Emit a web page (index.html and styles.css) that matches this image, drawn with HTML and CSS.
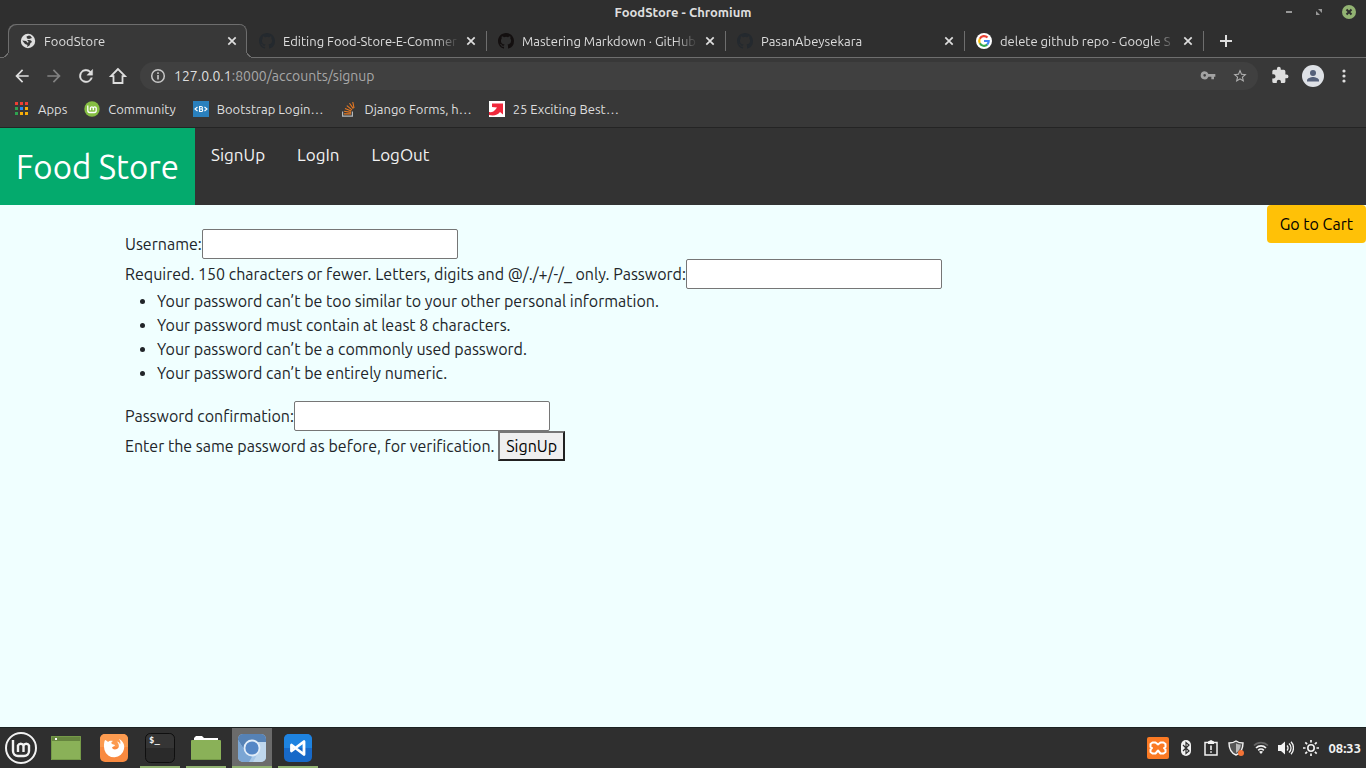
FILE: index.html
```html
<!DOCTYPE html>
<html lang="en">
<head>
  <meta charset="UTF-8" />
  <meta name="viewport" content="width=device-width, initial-scale=1.0" />
  <title>FoodStore</title>
  <link rel="stylesheet" href="styles.css">
</head>
<body>
  <!-- shared icons -->
  <svg class="sprite" aria-hidden="true">
    <symbol id="github" viewBox="0 0 16 16"><path d="M8 0C3.58 0 0 3.58 0 8c0 3.54 2.29 6.53 5.47 7.59.4.07.55-.17.55-.38 0-.19-.01-.82-.01-1.49-2.01.37-2.53-.49-2.69-.94-.09-.23-.48-.94-.82-1.13-.28-.15-.68-.52-.01-.53.63-.01 1.08.58 1.23.82.72 1.21 1.87.87 2.33.66.07-.52.28-.87.51-1.07-1.78-.2-3.64-.89-3.64-3.95 0-.87.31-1.59.82-2.15-.08-.2-.36-1.02.08-2.12 0 0 .67-.21 2.2.82a7.6 7.6 0 0 1 4 0c1.53-1.04 2.2-.82 2.2-.82.44 1.1.16 1.92.08 2.12.51.56.82 1.27.82 2.15 0 3.07-1.87 3.75-3.65 3.95.29.25.54.73.54 1.48 0 1.07-.01 1.93-.01 2.2 0 .21.15.46.55.38A8.01 8.01 0 0 0 16 8c0-4.42-3.58-8-8-8z"/></symbol>
    <symbol id="close" viewBox="0 0 16 16"><path d="M4.300 4.300l7.400 7.400M11.700 4.300l-7.400 7.400" fill="none" stroke="currentColor" stroke-width="1.700"/></symbol>
  </svg>

  <header class="browser">
    <div class="titlebar">
      <span class="window-title">FoodStore - Chromium</span>
      <div class="window-buttons">
        <button aria-label="Minimize"><svg width="14" height="14" viewBox="0 0 14 14"><path d="M4 6h6v2H4z" fill="#999"/></svg></button>
        <button aria-label="Restore"><svg width="14" height="14" viewBox="0 0 14 14"><path d="M6 4h4v4zM4 6v4h4z" fill="#999"/></svg></button>
        <button aria-label="Close"><svg width="14" height="14" viewBox="0 0 14 14"><circle cx="7" cy="7" r="7" fill="#92b372"/><path d="M4.500 4.500l5 5M9.500 4.500l-5 5" stroke="#2f2f2f" stroke-width="2"/></svg></button>
      </div>
    </div>

    <div class="tabs">
      <div class="tab active">
        <svg width="16" height="16" viewBox="0 0 16 16"><circle cx="8" cy="8" r="7.200" fill="#dedede"/><path d="M9 2.500L6.500 3.500 7 5.500l2 .5 3-1-1.500-2zM2.300 7.500l3.700.5 2 2 .500-1.500L7 7 9 7l2 .5 1 1.500-1.500 1-1 2.500-2.500 1.500.5-2-2.500-1-2-2.500z" fill="#383838"/></svg>
        <span>FoodStore</span>
        <button aria-label="Close tab"><svg width="16" height="16"><use href="#close"/></svg></button>
      </div>
      <div class="tab">
        <svg class="gh-blue" width="16" height="16"><use href="#github"/></svg>
        <span>Editing Food-Store-E-Commer</span>
        <button aria-label="Close tab"><svg width="16" height="16"><use href="#close"/></svg></button>
      </div>
      <div class="tab">
        <svg class="gh-black" width="16" height="16"><use href="#github"/></svg>
        <span>Mastering Markdown · GitHub</span>
        <button aria-label="Close tab"><svg width="16" height="16"><use href="#close"/></svg></button>
      </div>
      <div class="tab">
        <svg class="gh-blue" width="16" height="16"><use href="#github"/></svg>
        <span>PasanAbeysekara</span>
        <button aria-label="Close tab"><svg width="16" height="16"><use href="#close"/></svg></button>
      </div>
      <div class="tab">
        <svg width="16" height="16" viewBox="0 0 16 16"><circle cx="8" cy="8" r="8" fill="#fff"/><g fill="none" stroke-width="2.200"><path d="M11.500 4.600A4.800 4.800 0 0 0 3.800 5.700" stroke="#ea4335"/><path d="M3.800 5.700a4.800 4.800 0 0 0 0 4.600" stroke="#fbbc05"/><path d="M3.800 10.300a4.800 4.800 0 0 0 7.400 1.300" stroke="#34a853"/><path d="M11.200 11.600A4.800 4.800 0 0 0 12.700 8H8" stroke="#4285f4"/></g></svg>
        <span>delete github repo - Google S</span>
        <button aria-label="Close tab"><svg width="16" height="16"><use href="#close"/></svg></button>
      </div>
      <button class="new-tab" aria-label="New tab"><svg width="14" height="14" viewBox="0 0 14 14"><path d="M7 1v12M1 7h12" stroke="#dedede" stroke-width="2"/></svg></button>
    </div>

    <div class="toolbar">
      <button aria-label="Back"><svg width="20" height="20" viewBox="0 0 24 24"><path d="M20 11H7.830l5.590-5.590L12 4l-8 8 8 8 1.410-1.410L7.830 13H20z" fill="#dedede"/></svg></button>
      <button aria-label="Forward"><svg width="20" height="20" viewBox="0 0 24 24"><path d="M12 4l-1.410 1.410L16.170 11H4v2h12.170l-5.580 5.590L12 20l8-8z" fill="#828282"/></svg></button>
      <button aria-label="Reload"><svg width="20" height="20" viewBox="0 0 24 24"><path d="M17.650 6.350A8 8 0 1 0 19.730 14h-2.080A6 6 0 1 1 12 6c1.660 0 3.140.69 4.220 1.780L13 11h7V4z" fill="#dedede" stroke="#dedede" stroke-width=".4"/></svg></button>
      <button aria-label="Home"><svg width="20" height="20" viewBox="0 0 20 20"><path d="M10 3L3 10.200h2.500V17h9v-6.800H17z" fill="none" stroke="#dedede" stroke-width="1.800"/></svg></button>
      <div class="omnibox">
        <svg width="16" height="16" viewBox="0 0 16 16"><circle cx="8" cy="8" r="6.300" fill="none" stroke="#c8c8c8" stroke-width="1.500"/><path d="M7.200 7h1.600v4.500H7.200zM7.200 4.300h1.600v1.600H7.200z" fill="#c8c8c8"/></svg>
        <div class="url"><b>127.0.0.1</b>:8000/accounts/signup</div>
        <svg width="16" height="16" viewBox="0 0 24 24"><path d="M12.650 9A5.990 5.990 0 0 0 7 5a6 6 0 1 0 5.650 8H17v4h4v-4h2V9H12.650zM7 13a2 2 0 1 1 0-4 2 2 0 0 1 0 4z" fill="#a2a2a2"/></svg>
        <svg width="16" height="16" viewBox="0 0 24 24"><path d="M22 9.240l-7.190-.62L12 2 9.190 8.630 2 9.240l5.460 4.730L5.820 21 12 17.270 18.180 21l-1.630-7.030zM12 15.400l-3.760 2.270 1-4.280-3.320-2.880 4.380-.38L12 6.100l1.710 4.040 4.380.38-3.320 2.880 1 4.280z" fill="#b0b0b0"/></svg>
      </div>
      <button aria-label="Extensions"><svg width="20" height="20" viewBox="-1 0 26 26"><path d="M20.500 11H19V7a2 2 0 0 0-2-2h-4V3.500a2.500 2.500 0 0 0-5 0V5H4a2 2 0 0 0-1.990 2v3.800H3.500a2.700 2.700 0 0 1 0 5.400H2V20a2 2 0 0 0 2 2h3.800v-1.500a2.700 2.700 0 0 1 5.400 0V22H17a2 2 0 0 0 2-2v-4h1.500a2.500 2.500 0 0 0 0-5z" fill="#dedede"/></svg></button>
      <button aria-label="Profile"><svg width="22" height="22" viewBox="0 0 22 22"><circle cx="11" cy="11" r="11" fill="#dee1e6"/><circle cx="11" cy="8" r="3" fill="#56617a"/><path d="M5 16.500v-1.200c0-2 4-3.300 6-3.300s6 1.300 6 3.300v1.200z" fill="#56617a"/></svg></button>
      <button aria-label="Menu"><svg width="16" height="16" viewBox="0 0 16 16" fill="#dedede"><circle cx="8" cy="3" r="1.600"/><circle cx="8" cy="8" r="1.600"/><circle cx="8" cy="13" r="1.600"/></svg></button>
    </div>

    <nav class="bookmarks">
      <a href="#"><svg width="15" height="16" viewBox="0 0 15 16"><path d="M0 1h3v3H0zM5 1h3v3H5zM10 1h3v3h-3z" fill="#ee3f34"/><path d="M0 6h3v3H0zM0 11h3v3H0z" fill="#2fa24f"/><path d="M5 6h3v3H5z" fill="#2b88f5"/><path d="M10 6h3v3h-3zM5 11h3v3H5zM10 11h3v3h-3z" fill="#f9ae08"/></svg>Apps</a>
      <a href="#"><svg width="16" height="16" viewBox="0 0 16 16"><circle cx="8" cy="8" r="7.700" fill="#86be43"/><path d="M3.800 4.500V9.500a2 2 0 0 0 2 2h4.400a2 2 0 0 0 2-2V7a1.500 1.500 0 0 0-2.900 0v2.300M9.300 7a1.500 1.500 0 0 0-2.900 0v2.300" fill="none" stroke="#fff" stroke-width="1.300"/></svg>Community</a>
      <a href="#"><svg width="16" height="16" viewBox="0 0 16 16"><path d="M0 0h16v16H0z" fill="#2a80bd"/><path d="M4.500 6L2 8l2.500 2M11.500 6L14 8l-2.500 2" fill="none" stroke="#fff" stroke-width="1.100"/><path d="M6.600 5.500h1.600a1.200 1.200 0 0 1 0 2.500H6.600zM6.600 8h1.800a1.200 1.200 0 0 1 0 2.500H6.600z" fill="none" stroke="#fff" stroke-width="1.100"/></svg>Bootstrap Login…</a>
      <a href="#"><svg width="16" height="16" viewBox="0 0 16 16" fill="none"><path d="M2.600 10.500v4.700h9.800v-4.700" stroke="#b5b8ba" stroke-width="1.200"/><path d="M4 12.900h7M4.100 10.300l6.900 1.100M5 7.500l6.300 2.600M6.800 4.600l5.200 4.300M9.500 2.200l3.800 5.400M12.800 1l1.200 6" stroke="#e87922" stroke-width="1.100"/></svg>Django Forms, h…</a>
      <a href="#"><svg width="16" height="16" viewBox="0 0 16 16"><path d="M0 0h16v16H0z" fill="#fff"/><path d="M3 2.500h11v11L11 11c-2 3-6 4-11 3v-3c3 .5 5-.5 6.500-2.500L8 6.500 3 6z" fill="#f0283c"/></svg>25 Exciting Best…</a>
    </nav>
  </header>

  <main class="page">
    <nav class="topnav">
      <a class="brand" href="#">Food Store</a>
      <a href="#">SignUp</a>
      <a href="#">LogIn</a>
      <a href="#">LogOut</a>
    </nav>
    <a class="btn-cart" href="#">Go to Cart</a>
    <div class="container">
      <form onsubmit="return false">
        <label for="username">Username:</label><input type="text" id="username" />
        <br/>
        Required. 150 characters or fewer. Letters, digits and @/./+/-/_ only.
        <label for="password1">Password:</label><input type="password" id="password1" />
        <ul>
          <li>Your password can’t be too similar to your other personal information.</li>
          <li>Your password must contain at least 8 characters.</li>
          <li>Your password can’t be a commonly used password.</li>
          <li>Your password can’t be entirely numeric.</li>
        </ul>
        <label for="password2">Password confirmation:</label><input type="password" id="password2" />
        <br/>
        Enter the same password as before, for verification.
        <button type="submit">SignUp</button>
      </form>
    </div>
  </main>

  <footer class="taskbar">
    <button class="task start" aria-label="Menu"><svg width="32" height="32" viewBox="0 0 32 32" fill="none" stroke="#f2f2f2"><circle cx="16" cy="16" r="15" stroke-width="2"/><path d="M8 8v11a5 5 0 0 0 5 5h6a5 5 0 0 0 5-5v-5.500a3 3 0 0 0-5.500 0V20M18.500 13.500a3 3 0 0 0-5.500 0V20" stroke-width="2.400"/></svg></button>
    <div class="launchers">
      <button class="task" aria-label="Show desktop"><svg width="30" height="24" viewBox="0 0 30 24"><path d="M0 0h30v24H0z" fill="#8ab158"/><path d="M0 0h30v5H0z" fill="#66853f"/><path d="M4 2h2v2H4z" fill="#fff"/><path d="M.5.500h29v23H.5z" fill="none" stroke="#759a48"/></svg></button>
      <button class="task" aria-label="Firefox"><svg width="30" height="30" viewBox="0 0 30 30"><rect x="1" y="1" width="28" height="28" rx="5" fill="#f98a40"/><path d="M1 14V6a5 5 0 0 1 5-5h18a5 5 0 0 1 5 5v8z" fill="#fc9b50"/><path d="M6 7c1 0 2 1 3 2 1-1 3-1.500 5-1-2 1-2 2-1 3l3 1c0 1-2 1.500-3 2.500.5 2 3 2.500 5 1.500 3-1.500 2-5 0-7.500 2 .5 3 2 3 3 1-2 0-4-1-5.500 4 2 6 6 5 10a10 10 0 0 1-19.500 1C4.500 13 5 9 6 7z" fill="#fff"/></svg></button>
    </div>
    <button class="task open" aria-label="Terminal"><svg width="30" height="30" viewBox="0 0 30 30"><rect x=".5" y=".5" width="29" height="29" rx="5" fill="#2a2a2a" stroke="#0f0f0f"/><path d="M1 15V6a5 5 0 0 1 5-5h18a5 5 0 0 1 5 5v9z" fill="#353535"/><text x="4" y="10" class="prompt">$_</text></svg></button>
    <button class="task open" aria-label="Files"><svg width="30" height="26" viewBox="0 0 30 26"><path d="M3 6V3l2-2h6l2 2h14v3z" fill="#fff"/><rect y="5" width="30" height="20" rx="1" fill="#8ab158"/><path d="M.500 24.500h29" stroke="#759a48"/></svg></button>
    <button class="task open current" aria-label="Chromium"><svg width="30" height="30" viewBox="0 0 30 30"><rect x="1" y="1" width="28" height="28" rx="5" fill="#a8c8e8"/><path d="M1 6a5 5 0 0 1 5-5h18a5 5 0 0 1 5 5v3H15L8 18 1 7z" fill="#5682b5"/><path d="M1 7l8 12 7 3-4 7H6a5 5 0 0 1-5-5z" fill="#7ba6d4"/><path d="M22 18l-6 11h8a5 5 0 0 0 5-5V9h-9z" fill="#bfd7ed"/><circle cx="15" cy="15" r="7.500" fill="#5587c6" stroke="#e2edf8" stroke-width="1.800"/></svg></button>
    <button class="task open" aria-label="Visual Studio Code"><svg width="30" height="30" viewBox="0 0 30 30"><rect x="1" y="1" width="28" height="28" rx="5" fill="#1769c8"/><path d="M1 15V6a5 5 0 0 1 5-5h18a5 5 0 0 1 5 5v9z" fill="#1e83e0"/><path d="M21 8.500v13L8.500 12v6z" fill="none" stroke="#fff" stroke-width="2.800" stroke-linejoin="round"/></svg></button>

    <div class="tray">
      <svg width="22" height="22" viewBox="0 0 22 22"><rect width="22" height="22" rx="2" fill="#fb7a24"/><path d="M5.500 5.500h3l2.500 2 2.500-2h3L18.500 7v3L17 11l1.500 1.500v2.500l-2 1.500h-3l-2.500-3-2.500 3h-3l-2-1.500v-2.500L5 11 3.500 10V7z" fill="none" stroke="#fff" stroke-width="2" stroke-linejoin="round"/></svg>
      <svg width="16" height="16" viewBox="0 0 16 16"><rect x="3" width="10" height="16" rx="5" fill="#f2f2f2"/><path d="M5 5l6 6-3 2.500v-11L11 5l-6 6" fill="none" stroke="#2f2f2f" stroke-width="1.200"/></svg>
      <svg width="16" height="16" viewBox="0 0 16 16"><path d="M2 2.500h12v12.500H2z" fill="none" stroke="#f2f2f2" stroke-width="1.500"/><path d="M5 1.500L8 0l3 1.500V4H5zM7.200 5.500h1.600v4.500H7.200zM7.200 11.200h1.600v1.600H7.200z" fill="#f2f2f2"/></svg>
      <svg width="16" height="16" viewBox="0 0 16 16"><path d="M8 1c2 1.500 4.500 2 7 2 0 6-2 10-7 12C3 13 1 9 1 3c2.500 0 5-.500 7-2z" fill="#555" stroke="#f2f2f2" stroke-width="1.400"/><path d="M8 3.200c1.500 1 3 1.300 4.800 1.400C12.500 8.500 11 11.500 8 13z" fill="#b8b8b8"/><circle cx="13" cy="13" r="3" fill="#f37336"/></svg>
      <svg width="16" height="16" viewBox="0 0 16 16" fill="none" stroke-width="1.700"><path d="M1 5.500a10 10 0 0 1 14 0" stroke="#666"/><path d="M3 8a7 7 0 0 1 10 0M5.200 10.300a4 4 0 0 1 5.600 0" stroke="#f2f2f2"/><path d="M8 14l-2-2.200a3 3 0 0 1 4 0z" fill="#f2f2f2"/></svg>
      <svg width="16" height="16" viewBox="0 0 16 16"><path d="M0 5h3l4-3.500v13L3 11H0z" fill="#f2f2f2"/><path d="M9 5.500a3.500 3.500 0 0 1 0 5M11 3.500a6 6 0 0 1 0 9M13 1.800a9 9 0 0 1 0 12.400" fill="none" stroke="#f2f2f2" stroke-width="1.300"/></svg>
      <svg width="16" height="16" viewBox="0 0 16 16" fill="none" stroke="#f2f2f2"><circle cx="8" cy="8" r="3.200" stroke-width="1.600"/><path d="M8 0v2.500M8 13.500V16M0 8h2.500M13.500 8H16M2.300 2.300l1.800 1.800M11.900 11.900l1.800 1.800M2.300 13.700l1.800-1.800M11.900 4.100l1.800-1.800" stroke-width="1.700"/></svg>
      <time>08:33</time>
    </div>
  </footer>
</body>
</html>
```

FILE: styles.css
```css
* {
  box-sizing: border-box;
}
body {
  margin: 0;
  min-height: 100vh;
  display: flex;
  flex-direction: column;
  font-family: Ubuntu, "Noto Sans", sans-serif;
  font-size: 16px;
  line-height: 24px;
  color: #212529;
  background-color: azure;
}
svg {
  display: block;
  flex: none;
}
.sprite {
  position: absolute;
  width: 0;
  height: 0;
}
a {
  text-decoration: none;
  color: inherit;
}

/* browser window */
.browser {
  background-color: #383838;
  color: #dedede;
  font-size: 13px;
  border-bottom: 1px solid #242424;
}
.browser button, .task {
  display: flex;
  align-items: center;
  justify-content: center;
  padding: 0;
  border: 0;
  background: none;
  color: inherit;
}
.titlebar {
  display: grid;
  grid-template-columns: 1fr auto 1fr;
  align-items: center;
  height: 24px;
  background-color: #2f2f2f;
}
.window-title {
  grid-column: 2;
  font-weight: 700;
}
.window-buttons {
  display: flex;
  justify-content: flex-end;
  gap: 16px;
  padding-right: 10px;
}
.tabs {
  display: flex;
  height: 34px;
  padding-left: 8px;
  background-color: #2f2f2f;
  box-shadow: inset 0 -1px #6e6e6e;
}
.tab {
  position: relative;
  display: flex;
  flex: 0 1 239px;
  min-width: 0;
  align-items: center;
  gap: 8px;
  padding: 0 7px 0 12px;
}
.tab span {
  flex: 1;
  overflow: hidden;
  white-space: nowrap;
  mask-image: linear-gradient(to left, transparent, #000 24px);
}
.tab button {
  margin-left: -4px;
}
.tab:not(.active)::after {
  content: "";
  position: absolute;
  right: -1px;
  top: 7px;
  width: 1px;
  height: 20px;
  background-color: #6e6e6e;
}
.tab.active {
  background-color: #383838;
  box-shadow: inset 1px 1px #6e6e6e, inset -1px 0 #6e6e6e;
  border-radius: 8px 8px 0 0;
}
.tab.active::before, .tab.active::after {
  content: "";
  position: absolute;
  bottom: 0;
  width: 8px;
  height: 8px;
}
.tab.active::before {
  left: -7px;
  background: radial-gradient(circle at 0 0, #2f2f2f 7px, #6e6e6e 7px, #6e6e6e 8px, #383838 8px);
}
.tab.active::after {
  right: -7px;
  background: radial-gradient(circle at 100% 0, #2f2f2f 7px, #6e6e6e 7px, #6e6e6e 8px, #383838 8px);
}
.gh-blue { fill: #24292e; }
.gh-black { fill: #130f0f; }
.new-tab {
  width: 46px;
}
.toolbar {
  display: flex;
  align-items: center;
  gap: 12px;
  height: 36px;
  padding: 0 14px 0 12px;
}
.omnibox {
  flex: 1;
  display: flex;
  align-items: center;
  gap: 16px;
  height: 28px;
  padding: 0 10px;
  border-radius: 14px;
  background-color: #404040;
  font-size: 14px;
  color: #a8a8a8;
}
.url {
  flex: 1;
  margin-left: -8px;
}
.url b {
  font-weight: 400;
  color: #dedede;
}
.bookmarks {
  display: flex;
  align-items: center;
  gap: 17px;
  height: 33px;
  padding: 0 15px 4px;
}
.bookmarks a {
  display: flex;
  align-items: center;
  gap: 8px;
  white-space: nowrap;
}

/* food store page */
.page {
  flex: 1;
}
.topnav {
  display: flex;
  background-color: #333;
}
.topnav a {
  padding: 14px 16px;
  font-size: 17px;
  line-height: 26px;
  color: #f2f2f2;
}
.topnav .brand {
  font-size: 33px;
  line-height: 49px;
  color: white;
  background-color: #04aa6d;
}
.btn-cart {
  float: right;
  padding: 7px 13px;
  border-radius: 4px;
  background-color: #ffc107;
  color: #000;
}
.container {
  max-width: 1140px;
  margin: 0 auto;
  padding: 24px 12px;
}
.container input, .container button {
  height: 30px;
  font: inherit;
}
.container input {
  width: 256px;
  border: 1px solid #767676;
  border-radius: 2px;
  background-color: white;
}
.container button {
  padding: 1px 6px;
  border: 2px outset #767676;
  border-color: #767676 #212121 #212121 #767676;
  border-style: solid;
  background-color: #efefef;
  color: #000;
}
ul {
  margin: 0 0 16px;
  padding-left: 32px;
}

/* desktop panel */
.taskbar {
  display: flex;
  align-items: stretch;
  gap: 6px;
  height: 41px;
  background-color: #2f2f2f;
  border-top: 1px solid #1c2222;
}
.task {
  width: 40px;
}
.start {
  padding-left: 2px;
}
.launchers {
  display: flex;
  gap: 8px;
}
.open {
  box-shadow: inset 0 -2px #92b372;
}
.current {
  background-color: #6b6b6b;
}
.prompt {
  font: bold 9px "DejaVu Sans Mono", monospace;
  fill: #f2f2f2;
}
.tray {
  display: flex;
  align-items: center;
  gap: 9px;
  margin-left: auto;
  padding-right: 5px;
  color: #f2f2f2;
  font-size: 13px;
  font-weight: 700;
}
```
